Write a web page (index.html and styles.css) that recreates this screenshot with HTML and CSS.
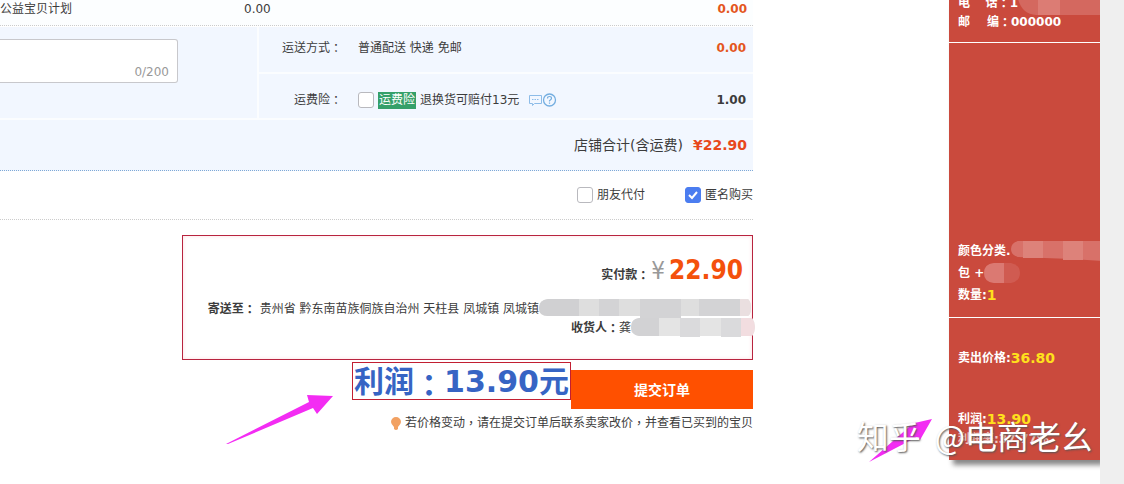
FILE: index.html
```html
<!DOCTYPE html>
<html lang="zh-CN">
<head>
<meta charset="utf-8">
<title>提交订单</title>
<link rel="stylesheet" href="styles.css">
</head>
<body>
<div class="page">
  <main class="order">
    <div class="plan">
      <span class="plan-name">公益宝贝计划</span>
      <span class="plan-price">0.00</span>
      <strong class="amount">0.00</strong>
    </div>
    <section class="details">
      <div class="message">
        <textarea class="message-input" aria-label="留言"></textarea>
        <span class="counter">0/200</span>
      </div>
      <div class="delivery">
        <div class="delivery-row">
          <span class="term">运送方式<span class="mark" lang="zh-TW">：</span></span>
          <span class="desc">普通配送 快递 免邮</span>
          <strong class="amount">0.00</strong>
        </div>
        <div class="delivery-row insurance">
          <span class="term">运费险<span class="mark" lang="zh-TW">：</span></span>
          <span class="desc">
            <input class="check" type="checkbox" id="ins">
            <label class="ins-label" for="ins"><span class="tag">运费险</span>退换货可赔付13元</label>
            <svg class="help" viewBox="0 0 29 14" width="29" height="14" fill="none" stroke="#8dbce8">
              <path d="M1.500 2.500h12v8h-7l-2 2v-2h-3z"/>
              <path d="M4 6.500h1.500M6.500 6.500h1.500M9 6.500h1.500"/>
              <circle cx="21.500" cy="7" r="6" stroke="#74aee0" stroke-width="1.300"/>
              <path d="M19.500 5.500q0-2 2-2t2 1.700q0 1-1.200 1.700t-.8 1.500M21.500 9.500v1.200" stroke="#74aee0" stroke-width="1.200"/>
            </svg>
          </span>
          <strong class="amount dark">1.00</strong>
        </div>
      </div>
    </section>
    <div class="subtotal">
      <span>店铺合计(含运费)</span>
      <strong class="subtotal-price">¥22.90</strong>
    </div>
    <div class="options">
      <label class="option"><input class="check" type="checkbox">朋友代付</label>
      <label class="option"><input class="check" type="checkbox" checked>匿名购买</label>
    </div>
    <section class="pay">
      <div class="pay-total">
        <strong>实付款<span class="mark" lang="zh-TW">：</span></strong>
        <span class="yen">¥</span>
        <strong class="pay-price">22.90</strong>
      </div>
      <div class="address">
        <strong>寄送至<span class="mark" lang="zh-TW">：</span></strong>
        <span>贵州省 黔东南苗族侗族自治州 天柱县 凤城镇 凤城镇</span>
        <svg class="smudge" viewBox="0 0 212 19" width="212" height="19">
          <path d="M9 0h200q3 3 3 9t-3 8H9Q0 17 0 9T9 0" fill="#dedede"/>
          <path d="M9 0h31v17H9Q0 17 0 9T9 0" fill="#d0d0d2"/>
          <path d="M60 0h20v17H60zM101 0h41v19h-41zM160 0h41v17h-41z" fill="#d3d3d5"/>
          <path d="M201 0h8q3 3 3 9t-3 8h-8z" fill="#eadfe0"/>
        </svg>
      </div>
      <div class="receiver">
        <strong>收货人<span class="mark" lang="zh-TW">：</span></strong>
        <span>龚</span>
        <svg class="smudge" viewBox="0 0 124 19" width="124" height="19">
          <path d="M8 0h113q3 4 3 9t-3 9H8Q0 17 0 9T8 0" fill="#e4e4e4"/>
          <path d="M8 0h20v18H8Q0 17 0 9T8 0" fill="#d2d2d4"/>
          <path d="M49 0h20v19H49zM90 0h20v19H90z" fill="#dadadc"/>
          <path d="M110 0h11q3 4 3 9t-3 9h-11z" fill="#f2dde0"/>
        </svg>
      </div>
    </section>
    <div class="submit">
      <strong class="profit">利润<span class="mark" lang="zh-TW">：</span>13.90元</strong>
      <button class="submit-button" type="button">提交订单</button>
    </div>
    <p class="note">
      <svg viewBox="0 0 10 13" width="10" height="13"><path d="M5 0a5 5 0 0 1 5 5q0 2-3 5v2q-2 2-4 0v-2Q0 7 0 5a5 5 0 0 1 5-5" fill="#f2a162"/></svg>
      <span>若价格变动<span class="mark" lang="zh-TW">，</span>请在提交订单后联系卖家改价<span class="mark" lang="zh-TW">，</span>并查看已买到的宝贝</span>
    </p>
    <svg class="arrow" viewBox="0 0 108 51" width="108" height="51"><path d="M0 50 83 8 81 1 107 2 91 20 87 14 2 50z" fill="#f32cf3"/></svg>
  </main>
  <aside class="panel">
    <div class="contact">
      <div class="line"><span class="spread"><span>电</span><span>话</span></span><span class="mark" lang="zh-TW">：</span>1
        <svg class="smudge" viewBox="0 0 82 30" width="82" height="30"><path d="M0 0h82v27H18Q4 26 0 11z" fill="#d4685f"/><path d="M20 0h22v27H20z" fill="#dc7c74"/></svg>
      </div>
      <div class="line"><span class="spread"><span>邮</span><span>编</span></span><span class="mark" lang="zh-TW">：</span>000000</div>
    </div>
    <div class="goods">
      <div class="line">颜色分类.
        <svg class="smudge" viewBox="0 0 92 20" width="92" height="20"><path d="M7 0h85v20L60 18 7 16Q0 14 0 8T7 0" fill="#d87169"/><path d="M12 0h20v17H12zM52 0h20v19H52z" fill="#dd827a"/></svg>
      </div>
      <div class="line">包 +
        <svg class="smudge" viewBox="0 0 36 20" width="36" height="20"><path d="M10 0h17q9 2 9 10t-9 10H10Q0 19 0 10T10 0" fill="#d05b51"/><path d="M10 0h10v20H10Q0 19 0 10T10 0" fill="#db7972"/></svg>
      </div>
      <div class="line">数量:<span class="num">1</span></div>
    </div>
    <div class="result">
      <div class="line sold">卖出价格:<span class="num">36.80</span></div>
      <div class="line">利润:<span class="num">13.90</span></div>
      <div class="line faint">利润率:37.77%</div>
    </div>
  </aside>
  <div class="gutter"></div>
  <div class="watermark">
    <svg class="pointer" viewBox="0 0 64 44" width="64" height="44"><path d="M0 43 40 8 37 6 63 0 51 21 48 18z" fill="#f32cf3"/></svg>
    <div class="watermark-text"><span>知乎</span><span>@电商老幺</span></div>
  </div>
</div>
</body>
</html>
```
FILE: styles.css
```css
* { box-sizing: border-box; }
body {
  margin: 0;
  background: #fff;
  color: #3c3c3c;
  font: 12px/18px "DejaVu Sans", "Noto Sans CJK SC", sans-serif;
}
.page {
  position: relative;
  display: flex;
  align-items: flex-start;
  min-height: 100vh;
  overflow: hidden;
}
.mark { font-family: "Noto Sans CJK TC", sans-serif; line-height: 1; vertical-align: -1px; }
.order {
  position: relative;
  flex: 1;
  min-width: 0;
  margin-right: 196px;
}
.amount { margin-left: auto; color: #e4571f; }
.dark { color: #3c3c3c; }
.plan {
  display: flex;
  height: 26px;
  padding-right: 6px;
  background: #fcfeff;
  border-bottom: 1px dotted #ccc;
}
.plan-name { width: 244px; }
.details {
  display: flex;
  margin-top: 1px;
  background: #f2f7ff;
  border-bottom: 2px solid #fbfdff;
}
.message {
  position: relative;
  width: 259px;
  padding: 12px 79px 0 0;
  border-right: 2px solid #fbfdff;
}
.message-input {
  display: block;
  width: 100%;
  height: 44px;
  border: 1px solid #c8c8cc;
  border-left: 0;
  border-radius: 0 3px 3px 0;
  background: #fff;
  resize: none;
}
.counter { position: absolute; right: 88px; top: 36px; color: #999; }
.delivery { flex: 1; }
.delivery-row {
  display: flex;
  align-items: center;
  height: 47px;
  padding: 0 7px 4px 0;
  border-bottom: 2px solid #fbfdff;
}
.insurance { height: 44px; padding: 8px 7px 0 0; border: 0; }
.term { width: 83px; text-align: right; }
.desc { display: flex; align-items: center; margin-left: 16px; }
.check {
  appearance: none;
  flex: none;
  width: 16px;
  height: 16px;
  margin: 0;
  border: 1px solid #b9b9be;
  border-radius: 3px;
  background: #fff;
}
.check:checked {
  border-color: #4b7df0;
  background: #4b7df0 url("data:image/svg+xml,%3Csvg xmlns='http://www.w3.org/2000/svg' viewBox='0 0 14 14'%3E%3Cpath d='M3 7l3 3 5-6' fill='none' stroke='white' stroke-width='2'/%3E%3C/svg%3E") center / 14px 14px no-repeat;
}
.ins-label { display: flex; align-items: center; margin-left: 4px; }
.tag { margin-right: 4px; padding: 0 1px; background: #35a06a; color: #fff; line-height: 17px; }
.help { margin-left: 9px; }
.subtotal {
  display: flex;
  justify-content: flex-end;
  align-items: center;
  gap: 10px;
  height: 51px;
  padding-right: 6px;
  background: #f2f7ff;
  border-bottom: 1px dotted #7fa9d6;
  font-size: 14px;
}
.subtotal-price { color: #e8481c; }
.options {
  display: flex;
  justify-content: flex-end;
  gap: 40px;
  height: 49px;
  align-items: center;
  border-bottom: 1px dotted #ccc;
}
.option { display: flex; align-items: center; gap: 4px; }
.pay {
  height: 125px;
  margin: 15px 0 0 182px;
  padding: 20px 0 0;
  border: 1px solid #b8243f;
  box-shadow: inset 0 0 4px #ffdfe2;
}
.pay-total {
  display: flex;
  justify-content: flex-end;
  align-items: baseline;
  padding-right: 9px;
  line-height: 28px;
}
.yen { margin: 0 4px 0 2px; color: #999; font-family: "DejaVu Sans Condensed", "DejaVu Sans", sans-serif; font-size: 24px; }
.pay-price { color: #f4510b; font-family: "DejaVu Sans Condensed", "DejaVu Sans", sans-serif; font-size: 26px; }
.address, .receiver { display: flex; justify-content: flex-end; align-items: center; height: 19px; white-space: nowrap; }
.address { margin-top: 10px; padding-right: 1px; }
.address strong { margin-right: 4px; }
.receiver { margin-right: -3px; }
.smudge { flex: none; }
.submit { display: flex; justify-content: flex-end; align-items: flex-start; margin-top: 2px; }
.profit {
  height: 38px;
  border: 1px solid #c21f32;
  padding: 0 1px;
  color: #3664c4;
  font-size: 30px;
  line-height: 38px;
}
.profit .mark { vertical-align: -4px; }
.submit-button {
  width: 182px;
  height: 39px;
  margin-top: 8px;
  border: 0;
  background: #ff5000;
  color: #fff;
  font: bold 14px/20px "DejaVu Sans", "Noto Sans CJK SC", sans-serif;
}
.note { display: flex; justify-content: flex-end; align-items: center; gap: 4px; margin: 5px 0 0; }
.arrow { position: absolute; left: 226px; top: 394px; }
.panel {
  display: flow-root;
  width: 151px;
  height: 460px;
  background: #ca4a3d;
  box-shadow: 4px 5px 5px #888;
  color: #fff;
  font-weight: bold;
  white-space: nowrap;
}
.contact { display: flow-root; height: 43px; padding-left: 9px; border-bottom: 1px solid #fff; }
.contact .line { height: 19px; }
.contact .line:first-child { margin-top: -7px; }
.line { display: flex; align-items: center; }
.spread { display: flex; justify-content: space-between; width: 41px; }
.goods { height: 275px; padding: 197px 0 0 9px; border-bottom: 1px solid #fff; }
.goods .line { height: 22px; }
.num { color: #ffe01c; font-size: 14px; }
.result { padding: 30px 0 0 9px; }
.result .line { height: 20px; }
.result .sold { margin-bottom: 41px; }
.faint { opacity: 0.7; }
.gutter { position: relative; width: 24px; min-height: 100vh; background: #efefef; }
.watermark { position: absolute; right: 31px; top: 415px; }
.pointer { position: absolute; left: 12px; top: 4px; }
.watermark-text {
  position: relative;
  display: flex;
  gap: 14px;
  color: #fff;
  font: 32px/40px "Noto Sans CJK SC", sans-serif;
  text-shadow: 1px 1px 2px #555;
  white-space: nowrap;
}
```
